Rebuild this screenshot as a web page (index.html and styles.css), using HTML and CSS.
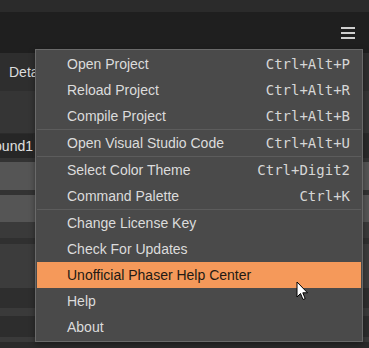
FILE: index.html
```html
<!DOCTYPE html>
<html lang="en">
<head>
    <meta charset="UTF-8">
    <meta name="viewport" content="width=device-width, initial-scale=1.0">
    <title>Phaser Editor</title>
    <link rel="stylesheet" href="styles.css">
</head>
<body>
    <div id="app">
        <div class="topbar"></div>
        <div class="header">
            <!-- main menu button -->
            <svg class="hamburger" width="14" height="13" viewBox="0 0 14 13">
                <rect x="0" y="0" width="14" height="2" fill="#cfcfcf"/>
                <rect x="0" y="5" width="14" height="2" fill="#cfcfcf"/>
                <rect x="0" y="10" width="14" height="2" fill="#cfcfcf"/>
            </svg>
        </div>
        <div class="tabs">
            <span class="tab">Details</span>
        </div>

        <div class="panel">
            <div class="band band-a"></div>
            <div class="band band-line"></div>
            <div class="band row-name"><span>Background1</span></div>
            <div class="band gap-4"></div>
            <div class="band field"></div>
            <div class="band gap-5"></div>
            <div class="band field field-2"></div>
            <div class="band band-b"></div>
            <div class="band band-c"></div>
            <div class="band band-d"></div>
            <div class="band band-e"></div>
            <div class="band band-f"></div>
            <div class="band band-g"></div>
            <div class="band band-h"></div>
            <div class="band band-i"></div>
        </div>

        <div id="mainMenu" class="menu">
            <div class="menu-item"><span>Open Project</span><span class="keys">Ctrl+Alt+P</span></div>
            <div class="menu-item"><span>Reload Project</span><span class="keys">Ctrl+Alt+R</span></div>
            <div class="menu-item"><span>Compile Project</span><span class="keys">Ctrl+Alt+B</span></div>
            <div class="menu-sep"></div>
            <div class="menu-item"><span>Open Visual Studio Code</span><span class="keys">Ctrl+Alt+U</span></div>
            <div class="menu-sep"></div>
            <div class="menu-item"><span>Select Color Theme</span><span class="keys">Ctrl+Digit2</span></div>
            <div class="menu-item"><span>Command Palette</span><span class="keys">Ctrl+K</span></div>
            <div class="menu-sep"></div>
            <div class="menu-item"><span>Change License Key</span></div>
            <div class="menu-item"><span>Check For Updates</span></div>
            <div class="menu-item active"><span>Unofficial Phaser Help Center</span></div>
            <div class="menu-item"><span>Help</span></div>
            <div class="menu-item"><span>About</span></div>
        </div>

        <!-- mouse pointer over the hovered item -->
        <svg class="cursor" width="13" height="21" viewBox="0 0 13 21">
            <path d="M1 1 L1 16 L4.5 12.5 L7 18.5 L9.2 17.6 L6.8 11.8 L11.5 11.8 Z" fill="#ffffff" stroke="#000000" stroke-width="1" stroke-linejoin="round"/>
        </svg>
    </div>
</body>
</html>
```

FILE: styles.css
```css
body {
    margin: 0;
    padding: 0;
    background-color: #2a2a2a;
    font-family: "Liberation Sans", Arial, sans-serif;
    font-size: 14px;
    color: #dcdcdc;
}

#app {
    position: relative;
    width: 369px;
    height: 348px;
    overflow: hidden;
}

.topbar {
    height: 12px;
    background-color: #2b2b2b;
}

.header {
    height: 41px;
    background-color: #1f1f1f;
    display: flex;
    justify-content: flex-end;
    align-items: flex-start;
    padding-right: 14px;
    box-sizing: border-box;
}

.hamburger {
    margin-top: 15px;
}

.tabs {
    height: 38px;
    background-color: #2e2e2e;
    display: flex;
    align-items: center;
    padding-left: 9px;
}

.panel {
    display: flex;
    flex-direction: column;
}

.band-a { height: 42px; background-color: #353535; }
.band-line { height: 1px; background-color: #2b2b2b; }

.row-name {
    height: 24px;
    width: 33px;
    background-color: #262626;
    display: flex;
    justify-content: flex-end;
    align-items: center;
    overflow: hidden;
    white-space: nowrap;
    font-size: 14px;
    color: #e0e0e0;
}

.gap-4 { height: 4px; background-color: #333333; }
.gap-5 { height: 5px; background-color: #333333; }
.field { height: 28px; background-color: #555555; }
.field-2 { height: 27px; }
.band-b { height: 16px; background-color: #3a3a3a; }
.band-c { height: 6px; background-color: #303030; }
.band-d { height: 44px; background-color: #3c3c3c; }
.band-e { height: 20px; background-color: #2e2e2e; }
.band-f { height: 8px; background-color: #3a3a3a; }
.band-g { height: 21px; background-color: #2d2d2d; }
.band-h { height: 5px; background-color: #3a3a3a; }
.band-i { height: 6px; background-color: #2a2a2a; }

.menu {
    position: absolute;
    left: 35px;
    top: 49px;
    width: 324px;
    padding: 1px;
    border: 1px solid #6a6a6a;
    background-color: #4a4a4a;
    box-shadow: 0 2px 6px rgba(0, 0, 0, 0.4);
}

.menu-item {
    height: 26px;
    display: flex;
    justify-content: space-between;
    align-items: center;
    padding: 0 11px 0 30px;
    color: #dcdcdc;
    white-space: nowrap;
}

.menu-item.active {
    background-color: #f5995a;
    color: #231a14;
}

.keys {
    font-family: "DejaVu Sans Mono", "Liberation Mono", monospace;
    font-size: 14px;
    color: #d6d6d6;
}

.menu-sep {
    height: 1px;
    background-color: #5c5c5c;
}

.cursor {
    position: absolute;
    left: 296px;
    top: 281px;
}
```
